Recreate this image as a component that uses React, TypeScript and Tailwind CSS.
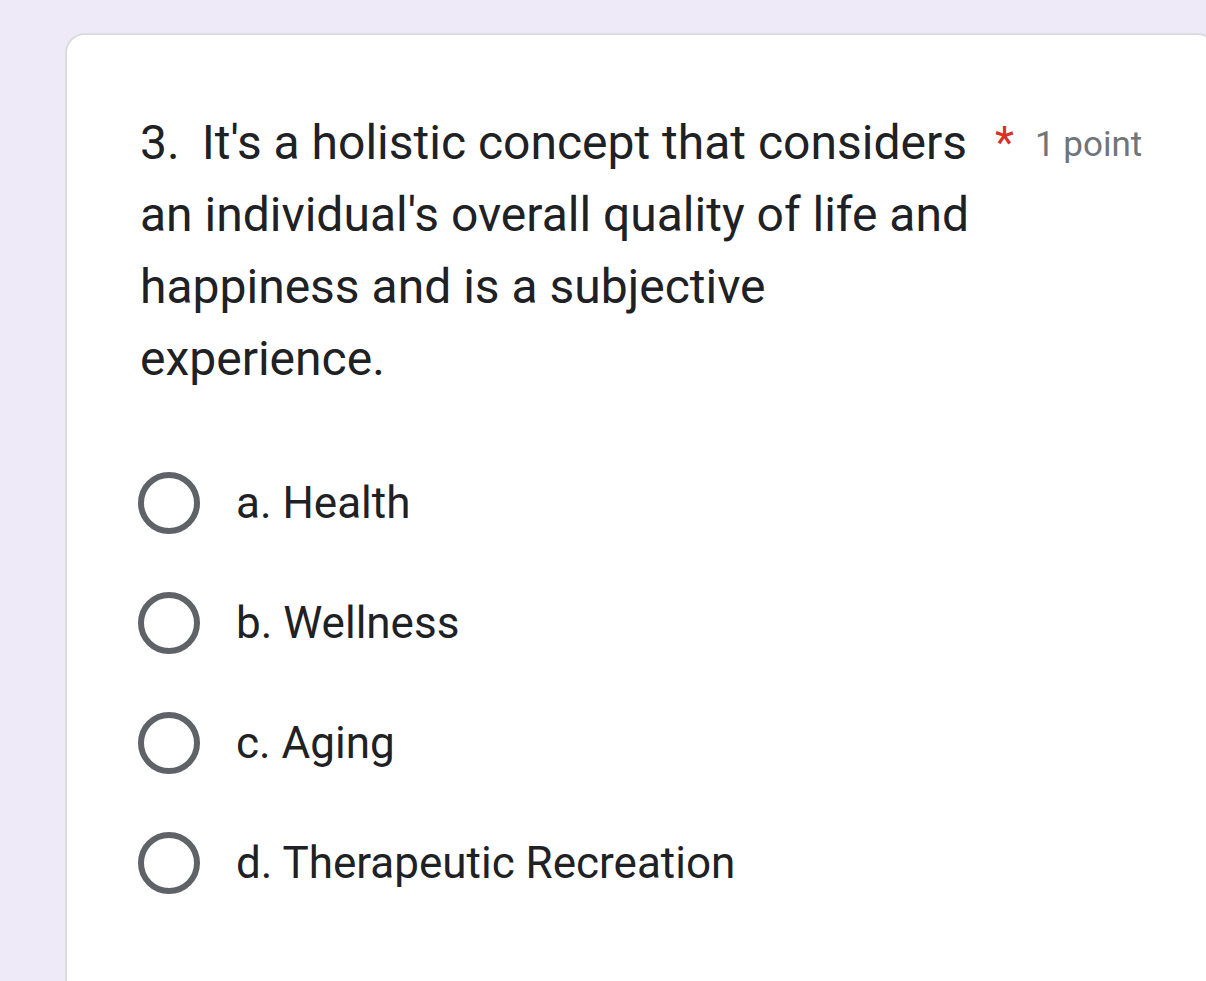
import React from "react";

const options = ["a. Health", "b. Wellness", "c. Aging", "d. Therapeutic Recreation"];

export default function App() {
  return (
    <div
      className="w-[1206px] h-[981px] overflow-hidden bg-[#eeeaf7] pt-[33px] pl-[65px]"
      style={{ fontFamily: "Roboto, 'Noto Sans', sans-serif" }}
    >
      <div className="w-[1152px] h-[1000px] bg-white rounded-[20px] border-2 border-[#dadce0] pt-[72px] pl-[73px]">
        <div className="flex items-start">
          <div className="w-[855px] whitespace-nowrap text-[48px] leading-[72px] text-[#202124]">
            <span className="mr-[22px]">3.</span>It's a holistic concept that considers
            <br />
            an individual's overall quality of life and
            <br />
            happiness and is a subjective
            <br />
            experience.
          </div>
          <div className="flex items-start pt-[14px]">
            <span className="text-[44px] leading-[44px] text-[#d93025]">*</span>
            <span className="ml-[21px] text-[35px] leading-[44px] text-[#70757a] pt-[2px]">1 point</span>
          </div>
        </div>
        <div className="mt-[48px] flex flex-col">
          {options.map((o) => (
            <div key={o} className="h-[120px] flex items-center">
              <div className="ml-[-2px] w-[62px] h-[62px] rounded-full border-[6px] border-[#5f6368] shrink-0" />
              <span className="ml-[36px] text-[44px] text-[#202124] leading-[60px]">{o}</span>
            </div>
          ))}
        </div>
      </div>
    </div>
  );
}
